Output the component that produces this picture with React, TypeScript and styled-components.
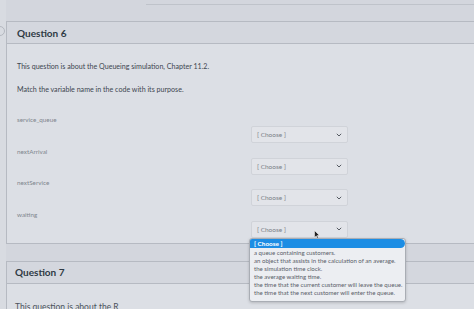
import styled, { createGlobalStyle } from 'styled-components';

const GlobalStyle = createGlobalStyle`
  html, body {
    margin: 0;
    padding: 0;
    background: #d3d6dd;
    font-family: Lato, 'Open Sans', sans-serif;
    overflow: hidden;
  }
`;

const rows = ['service_queue', 'nextArrival', 'nextService', 'waiting'];

const options = [
  'a queue containing customers.',
  'an object that assists in the calculation of an average.',
  'the simulation time clock.',
  'the average waiting time.',
  'the time that the current customer will leave the queue.',
  'the time that the next customer will enter the queue.',
];

const Chevron = () => (
  <svg width="6" height="4" viewBox="0 0 6 4">
    <polyline points="0.8,0.8 3,3 5.2,0.8" fill="none" stroke="#555a62" strokeWidth="1" />
  </svg>
);

const App = () => {
  return (
    <>
      <GlobalStyle />
      <Page>
        <Rail>
          <Marker />
        </Rail>
        <Main>
          <TopRule />
          <Card>
            <CardHeader>Question 6</CardHeader>
            <CardBody>
              <Prompt>This question is about the Queueing simulation, Chapter 11.2.</Prompt>
              <Prompt $last>Match the variable name in the code with its purpose.</Prompt>
              <Rows>
                {rows.map((name, i) => (
                  <Row key={name}>
                    <VarName>{name}</VarName>
                    <Select>
                      <span>[ Choose ]</span>
                      <Chevron />
                      {i === rows.length - 1 && (
                        <>
                          <Cursor viewBox="0 0 6 9" width="6" height="9">
                            <path d="M0.5 0.5 L0.5 7.5 L2.2 5.9 L3.4 8.5 L4.4 8 L3.3 5.5 L5.5 5.5 Z" fill="#222" stroke="#fff" strokeWidth="0.5" />
                          </Cursor>
                          <Menu>
                            <MenuItem $active>[ Choose ]</MenuItem>
                            {options.map((o) => (
                              <MenuItem key={o}>{o}</MenuItem>
                            ))}
                          </Menu>
                        </>
                      )}
                    </Select>
                  </Row>
                ))}
              </Rows>
            </CardBody>
          </Card>
          <Card $next>
            <CardHeader $narrow>Question 7</CardHeader>
            <CardBody $narrow>
              <Prompt $dim>This question is about the R</Prompt>
            </CardBody>
          </Card>
        </Main>
      </Page>
    </>
  );
};

const Page = styled.div`
  display: flex;
  width: 474px;
  height: 309px;
  overflow: hidden;
`;

const Rail = styled.div`
  flex: none;
  width: 6px;
  padding-top: 26px;
  background: #d8dbe1;
  overflow: hidden;
`;

const Marker = styled.div`
  width: 8px;
  height: 8px;
  margin-left: -5px;
  border: 1px solid #b3b7bf;
  border-radius: 50%;
`;

const Main = styled.div`
  flex: 1;
  min-width: 0;
  padding-top: 4px;
`;

const TopRule = styled.div`
  margin-left: 140px;
  border-top: 1px solid #bfc3ca;
`;

const Card = styled.section<{ $next?: boolean }>`
  margin-top: ${({ $next }) => ($next ? '17px' : '16px')};
  margin-right: -10px;
  border: 1px solid #b6bac2;
  border-right: none;
  background: #dcdfe5;
`;

const CardHeader = styled.h2<{ $narrow?: boolean }>`
  margin: 0;
  height: 21px;
  padding-left: ${({ $narrow }) => ($narrow ? '8px' : '10px')};
  display: flex;
  align-items: center;
  background: #d4d7de;
  border-bottom: 1px solid #b6bac2;
  color: #2f3a44;
  font-size: 10px;
  font-weight: 700;
`;

const CardBody = styled.div<{ $narrow?: boolean }>`
  padding: ${({ $narrow }) => ($narrow ? '19px 8px 10px' : '18px 10px 5px')};
`;

const Prompt = styled.p<{ $last?: boolean; $dim?: boolean }>`
  margin: 0 0 ${({ $last }) => ($last ? '22px' : '14px')};
  font-size: ${({ $dim }) => ($dim ? '8.5px' : '7.1px')};
  line-height: 9px;
  color: ${({ $dim }) => ($dim ? '#4b535c' : '#3d4650')};
`;

const Rows = styled.div`
  display: flex;
  flex-direction: column;
  gap: 4.5px;
`;

const Row = styled.div`
  display: grid;
  grid-template-columns: 234px 97px;
  height: 27px;
`;

const VarName = styled.div`
  align-self: start;
  font-size: 6.3px;
  line-height: 8px;
  color: #80868e;
`;

const Select = styled.div`
  position: relative;
  margin-top: 10px;
  height: 17px;
  box-sizing: border-box;
  padding: 0 5px 0 5px;
  display: flex;
  align-items: center;
  justify-content: space-between;
  background: #e2e4e9;
  border: 1px solid #d0d3d9;
  border-radius: 2px;
  font-size: 6.5px;
  color: #7a8088;
`;

const Cursor = styled.svg`
  position: absolute;
  left: 62px;
  top: 8px;
`;

const Menu = styled.div`
  position: absolute;
  left: -3px;
  top: 16px;
  z-index: 2;
  width: 155px;
  padding-bottom: 3px;
  background: #eceef2;
  border: 1px solid #a9adb4;
  border-radius: 3px;
  box-shadow: 0 1px 3px rgba(0, 0, 0, 0.18);
  overflow: hidden;
`;

const MenuItem = styled.div<{ $active?: boolean }>`
  height: ${({ $active }) => ($active ? '9px' : '8.2px')};
  margin-bottom: ${({ $active }) => ($active ? '1px' : '0')};
  padding-left: 4px;
  white-space: nowrap;
  font-size: ${({ $active }) => ($active ? '6.4px' : '6.1px')};
  line-height: ${({ $active }) => ($active ? '9px' : '8.2px')};
  font-weight: ${({ $active }) => ($active ? 700 : 400)};
  color: ${({ $active }) => ($active ? '#ffffff' : '#5a6069')};
  background: ${({ $active }) => ($active ? '#1c8de4' : 'transparent')};
  border-radius: ${({ $active }) => ($active ? '0 6px 6px 0' : '0')};
`;

export default App;
